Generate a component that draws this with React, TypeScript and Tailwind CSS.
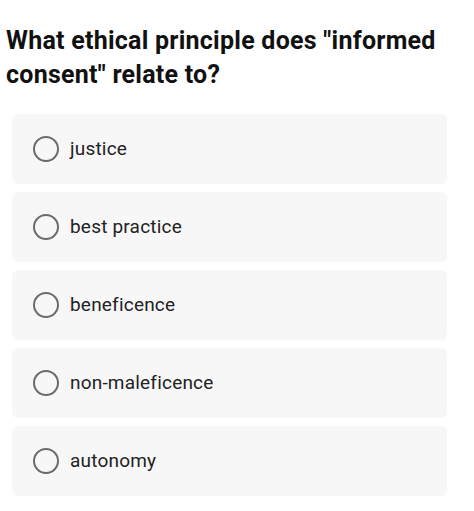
const options = ['justice', 'best practice', 'beneficence', 'non-maleficence', 'autonomy']

export default function App() {
  return (
    <div className="min-h-screen bg-white px-[6px] pt-[24px] font-['Roboto',sans-serif]">
      <h1 className="text-[25px] font-bold leading-[34px] tracking-[0.25px] text-[#111]">
        What ethical principle does "informed consent" relate to?
      </h1>
      <div className="mt-[22px] flex flex-col gap-[8px] pl-[6px] pr-[21px]">
        {options.map((option) => (
          <label
            key={option}
            className="flex h-[70px] items-center gap-[11px] rounded-[6px] bg-[#f7f7f7] pl-[21px]"
          >
            <span className="size-[26px] shrink-0 rounded-full border-2 border-[#6b6b6b]" />
            <span className="text-[19px] tracking-[0.2px] text-[#222]">{option}</span>
          </label>
        ))}
      </div>
    </div>
  )
}
